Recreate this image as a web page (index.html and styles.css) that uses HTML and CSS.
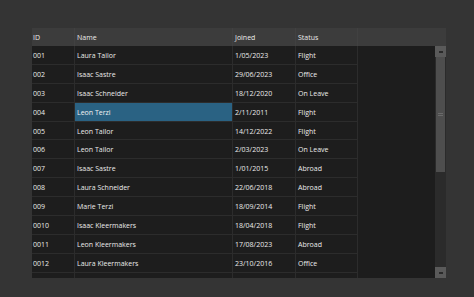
FILE: index.html
```html
<!DOCTYPE html>
<html lang="en">
<head>
  <meta charset="UTF-8">
  <title>Crew Grid</title>
  <link rel="stylesheet" href="styles.css">
</head>
<body>
  <div class="grid">
    <div class="grid-head">
      <div class="cell c-id">ID</div>
      <div class="cell c-name">Name</div>
      <div class="cell c-joined">Joined</div>
      <div class="cell c-status">Status</div>
      <div class="cell c-fill"></div>
    </div>
    <div class="grid-body">
      <div class="rows" id="rows"></div>
      <div class="scrollbar">
        <div class="sb-btn"><span></span></div>
        <div class="sb-track">
          <div class="sb-thumb"><span class="grip"></span></div>
        </div>
        <div class="sb-btn"><span></span></div>
      </div>
    </div>
  </div>

  <script>
    const crew = [
      ["001", "Laura Tailor", "1/05/2023", "Flight"],
      ["002", "Isaac Sastre", "29/06/2023", "Office"],
      ["003", "Isaac Schneider", "18/12/2020", "On Leave"],
      ["004", "Leon Terzi", "2/11/2011", "Flight"],
      ["005", "Leon Tailor", "14/12/2022", "Flight"],
      ["006", "Leon Tailor", "2/03/2023", "On Leave"],
      ["007", "Isaac Sastre", "1/01/2015", "Abroad"],
      ["008", "Laura Schneider", "22/06/2018", "Abroad"],
      ["009", "Marie Terzi", "18/09/2014", "Flight"],
      ["0010", "Isaac Kleermakers", "18/04/2018", "Flight"],
      ["0011", "Leon Kleermakers", "17/08/2023", "Abroad"],
      ["0012", "Laura Kleermakers", "23/10/2016", "Office"],
      ["", "", "", ""]
    ];
    const cols = ["c-id", "c-name", "c-joined", "c-status"];
    const rows = document.getElementById("rows");

    crew.forEach((item, r) => {
      const row = document.createElement("div");
      row.className = "row";
      item.forEach((text, c) => {
        const cell = document.createElement("div");
        cell.className = "cell " + cols[c];
        // the current cell in the reference is the name of row 004
        if (r === 3 && c === 1) cell.classList.add("selected");
        cell.textContent = text;
        row.appendChild(cell);
      });
      rows.appendChild(row);
    });
  </script>
</body>
</html>
```

FILE: styles.css
```css
body {
  margin: 0;
  height: 297px;
  background: #343434;
  font-family: 'Open Sans', 'Noto Sans', sans-serif;
  font-size: 7px;
  color: #ebebeb;
  padding: 28px 0 0 32px;
  box-sizing: border-box;
  overflow: hidden;
}

.grid {
  width: 414px;
  height: 250px;
  display: flex;
  flex-direction: column;
  background: #1d1d1d;
}

.grid-head {
  height: 18px;
  display: flex;
  background: #3c3c3c;
  flex-shrink: 0;
}

.grid-head .cell {
  border-right: 1px solid #414141;
}

.grid-body {
  flex: 1;
  display: flex;
  min-height: 0;
}

.rows {
  flex: 1;
  overflow: hidden;
}

.row {
  height: 18.9px;
  display: flex;
}

.cell {
  box-sizing: border-box;
  padding-left: 1px;
  display: flex;
  align-items: center;
  white-space: nowrap;
  overflow: hidden;
}

.row .cell {
  padding-top: 1px;
  border-right: 1px solid #2c2c2c;
  border-bottom: 1px solid #2c2c2c;
}

.c-id { width: 43px; }
.c-name { width: 158px; padding-left: 2px; }
.c-joined { width: 63px; padding-left: 2px; }
.c-status { width: 62px; padding-left: 2px; }
.c-fill { flex: 1; border-right: none !important; }

.cell.selected {
  background: #2a6283;
  color: #f2f2f2;
}

.scrollbar {
  width: 11px;
  display: flex;
  flex-direction: column;
  background: #2b2b2b;
}

.sb-btn {
  height: 11px;
  background: #5a5a5a;
  display: flex;
  justify-content: center;
  align-items: center;
  flex-shrink: 0;
}

.sb-btn span {
  width: 4px;
  height: 2px;
  background: #2a2a2a;
}

.sb-track {
  flex: 1;
  background: #2b2b2b;
}

.sb-thumb {
  height: 115px;
  margin: 0 1px;
  background: #4e4e4e;
  display: flex;
  justify-content: center;
  align-items: center;
}

.grip {
  width: 5px;
  height: 3px;
  border-top: 1px solid #6a6a6a;
  border-bottom: 1px solid #6a6a6a;
  box-sizing: border-box;
}
```
